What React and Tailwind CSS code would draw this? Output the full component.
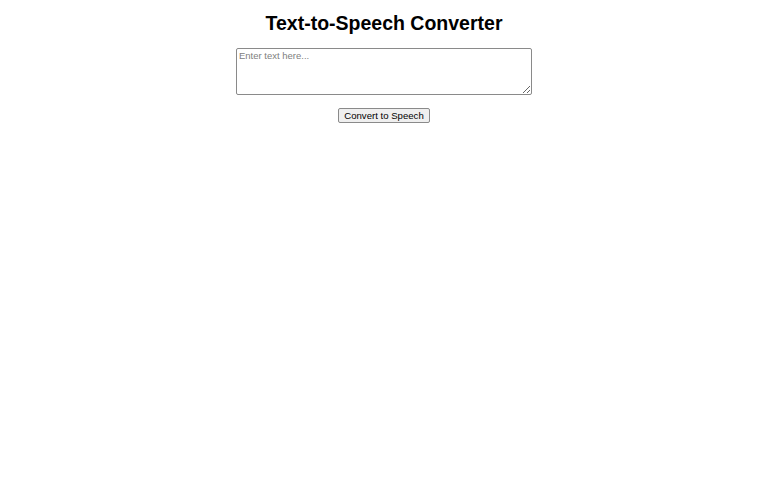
export default function App() {
  return (
    <div className="min-h-screen bg-white flex flex-col items-center" style={{ fontFamily: '"Liberation Sans", Arial, sans-serif' }}>
      <h1 className="mt-[12px] text-[19.5px] leading-[22px] font-bold text-black">Text-to-Speech Converter</h1>
      <textarea
        placeholder="Enter text here..."
        className="mt-[14px] w-[296px] h-[47px] border border-[#8a8a8a] rounded-[2px] px-[2px] py-[1px] text-[9.5px] leading-[11px] text-black placeholder:text-[#808080] outline-none"
      />
      <button
        type="button"
        className="mt-[13px] h-[15px] px-[5px] bg-[#efefef] border border-[#8a8a8a] rounded-[2px] text-[9.6px] leading-[12px] text-black"
      >
        Convert to Speech
      </button>
    </div>
  )
}
